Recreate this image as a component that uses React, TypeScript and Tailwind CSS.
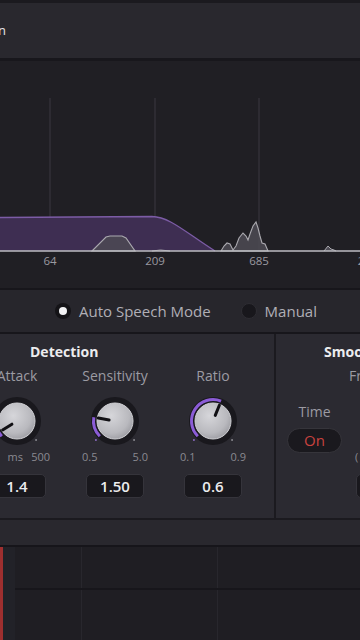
import React from "react";

const FONT = { fontFamily: '"Open Sans", "Noto Sans", sans-serif' };

// angle in degrees from 12 o'clock, clockwise; knob range is -135..135
function polar(cx: number, cy: number, r: number, deg: number) {
  const a = ((deg - 90) * Math.PI) / 180;
  return [cx + r * Math.cos(a), cy + r * Math.sin(a)];
}

function Knob({ angle, id }: { angle: number; id: string }) {
  const c = 26;
  const [ax, ay] = polar(c, c, 21.5, -135);
  const [bx, by] = polar(c, c, 21.5, angle);
  const large = angle + 135 > 180 ? 1 : 0;
  const [p1x, p1y] = polar(c, c, 6, angle);
  const [p2x, p2y] = polar(c, c, 17, angle);
  const [d1x, d1y] = polar(c, c, 27, -135);
  const [d2x, d2y] = polar(c, c, 27, 135);
  return (
    <svg width="52" height="56" viewBox="0 0 52 56" className="overflow-visible">
      <defs>
        <radialGradient id={id} cx="40%" cy="35%" r="70%">
          <stop offset="0%" stopColor="#d6d6da" />
          <stop offset="70%" stopColor="#b9b9be" />
          <stop offset="100%" stopColor="#9c9ca2" />
        </radialGradient>
      </defs>
      <circle cx={c} cy={c} r="24" fill="#19181d" />
      {angle > -130 && (
        <path
          d={`M${ax},${ay} A21.5,21.5 0 ${large} 1 ${bx},${by}`}
          stroke="#8b5cd6"
          strokeWidth="3"
          fill="none"
        />
      )}
      <circle cx={c} cy={c} r="18" fill={`url(#${id})`} stroke="#cfcfd3" strokeWidth="1" />
      <line x1={p1x} y1={p1y} x2={p2x} y2={p2y} stroke="#111014" strokeWidth="3" strokeLinecap="round" />
      <circle cx={d1x} cy={d1y} r="1" fill={angle > -130 ? "#8b6bc0" : "#8a8990"} />
      <circle cx={d2x} cy={d2y} r="1" fill="#8a8990" />
    </svg>
  );
}

function KnobCell({
  label,
  angle,
  id,
  min,
  unit,
  max,
  value,
}: {
  label: string;
  angle: number;
  id: string;
  min: string;
  unit?: string;
  max: string;
  value: string;
}) {
  return (
    <div className="flex w-[98px] shrink-0 flex-col items-center">
      <div className="mt-[4px] h-[20px] text-[14px] leading-[20px] text-[#9c9ba3] whitespace-nowrap">{label}</div>
      <div className="mt-[9px] h-[52px]">
        <Knob angle={angle} id={id} />
      </div>
      <div className="mt-[3px] flex h-[14px] w-[66px] items-center justify-between text-[11px] leading-[14px] text-[#8a8990]">
        <span>{min}</span>
        <span>{unit}</span>
        <span>{max}</span>
      </div>
      <div className="mt-[10px] flex h-[24px] w-[58px] items-center justify-center rounded-[5px] border border-[#35343b] bg-[#19181d] text-[15px] font-semibold text-[#ececee]">
        {value}
      </div>
    </div>
  );
}

function Spectrum() {
  return (
    <svg width="360" height="227" viewBox="0 61 360 227" className="block">
      {[50, 155, 259].map((x) => (
        <line key={x} x1={x} y1="98" x2={x} y2="251" stroke="#3a3940" strokeWidth="1" />
      ))}
      <path d="M0,217.5 L152,216.5 C170,217 185,232 215,251 L0,251 Z" fill="#3e2e52" />
      <path d="M0,217.5 L152,216.5 C170,217 185,232 215,251" fill="none" stroke="#7c5ca6" strokeWidth="1.3" />
      <path
        d="M92,251 L106,237 L110,236 L122,236 L126,238 L135,251 Z"
        fill="#4d4b54"
        fillOpacity="0.8"
        stroke="#aaa9af"
        strokeWidth="1.1"
      />
      <path d="M152,251 Q160,249 170,251" fill="none" stroke="#aaa9af" strokeWidth="1" />
      <path
        d="M221,251 L224,246 L227,243 L230,244 L233,250 L236,246 L239,238 L243,233 L246,236 L248,240 L250,234 L253,226 L256,222 L258,228 L260,236 L262,243 L265,244 L268,251 Z"
        fill="#4d4b54"
        fillOpacity="0.85"
        stroke="#aaa9af"
        strokeWidth="1.1"
      />
      <path d="M324,251 L328,246 L331,249 L334,250 L336,251" fill="#4d4b54" stroke="#aaa9af" strokeWidth="1" />
      <line x1="0" y1="251" x2="360" y2="251" stroke="#bdbcc2" strokeWidth="1.6" />
      {[
        [50, "64"],
        [155, "209"],
        [259, "685"],
        [364, "2k"],
      ].map(([x, t]) => (
        <text
          key={t as string}
          x={x as number}
          y="265"
          textAnchor="middle"
          fontSize="11.5"
          fill="#9a99a0"
          style={FONT}
        >
          {t}
        </text>
      ))}
    </svg>
  );
}

export default function App() {
  return (
    <div className="h-[640px] w-[360px] overflow-hidden bg-[#1f1e23]" style={FONT}>
      {/* top strip + header */}
      <div className="h-[3px] bg-[#1b1a1f]" />
      <div className="flex h-[58px] items-center border-b-[3px] border-[#18171c] bg-[#29282e]">
        <span className="-ml-[2px] text-[13px] text-[#e4e4e8]">n</span>
      </div>

      {/* spectrum */}
      <div className="h-[227px] bg-[#201f24]">
        <Spectrum />
      </div>

      {/* mode row */}
      <div className="flex h-[46px] items-center border-y-2 border-[#17161b] bg-[#27262c] pl-[55px] text-[15px] text-[#b0afb6]">
        <div className="flex h-[16px] w-[16px] items-center justify-center rounded-full bg-[#141317]">
          <div className="h-[8px] w-[8px] rounded-full bg-[#f2f2f4]" />
        </div>
        <span className="ml-[8px]">Auto Speech Mode</span>
        <div className="ml-[30px] h-[16px] w-[16px] rounded-full border border-[#2e2d33] bg-[#18171c]" />
        <span className="ml-[8px]">Manual</span>
      </div>

      {/* panels */}
      <div className="flex h-[186px] border-b-2 border-[#1b1a1f] bg-[#2b2a31]">
        <div className="flex w-[274px] shrink-0 flex-col">
          <div className="mt-[8px] h-[20px] pl-[30px] text-[14px] font-bold leading-[20px] text-[#ececee]">Detection</div>
          <div className="-ml-[32px] flex">
            <KnobCell label="Attack" angle={-122} id="k1" min="0.1" unit="ms" max="500" value="1.4" />
            <KnobCell label="Sensitivity" angle={-80} id="k2" min="0.5" max="5.0" value="1.50" />
            <KnobCell label="Ratio" angle={22} id="k3" min="0.1" max="0.9" value="0.6" />
          </div>
        </div>
        <div className="w-[2px] shrink-0 bg-[#1b1a1f]" />
        <div className="flex flex-1 flex-col">
          <div className="mt-[8px] h-[20px] whitespace-nowrap pl-[48px] text-[14px] font-bold leading-[20px] text-[#ececee]">
            Smoothing
          </div>
          <div className="flex">
            <div className="flex w-[73px] shrink-0 flex-col items-center pl-[4px]">
              <div className="mt-[40px] h-[20px] text-[14px] leading-[20px] text-[#9c9ba3]">Time</div>
              <div className="mt-[6px] flex h-[25px] w-[55px] items-center justify-center rounded-full border border-[#36353b] bg-[#1a191e] text-[15px] text-[#c8423e]">
                On
              </div>
            </div>
            <div className="flex flex-col">
              <div className="mt-[4px] h-[20px] whitespace-nowrap text-[14px] leading-[20px] text-[#9c9ba3]">Frequency</div>
              <div className="mt-[64px] h-[14px] pl-[6px] text-[11px] leading-[14px] text-[#8a8990]">(</div>
              <div className="ml-[7px] mt-[10px] h-[24px] w-[58px] rounded-[5px] border border-[#35343b] bg-[#19181d]" />
            </div>
          </div>
        </div>
      </div>

      {/* lower band */}
      <div className="h-[27px] border-b-2 border-[#16151a] bg-[#29282e]" />

      {/* timeline */}
      <div className="flex h-[100px]">
        <div className="w-[3px] shrink-0 bg-[#9e2f2f]" />
        <div className="w-[12px] shrink-0 bg-[#222228]" />
        <div className="flex flex-1 flex-col">
          <div className="flex h-[43px] border-b-2 border-[#17161b]">
            <div className="w-[67px] border-r border-[#28272d]" />
            <div className="w-[136px] border-r border-[#28272d]" />
          </div>
          <div className="flex flex-1">
            <div className="w-[67px] border-r border-[#28272d]" />
            <div className="w-[136px] border-r border-[#28272d]" />
          </div>
        </div>
      </div>
    </div>
  );
}
